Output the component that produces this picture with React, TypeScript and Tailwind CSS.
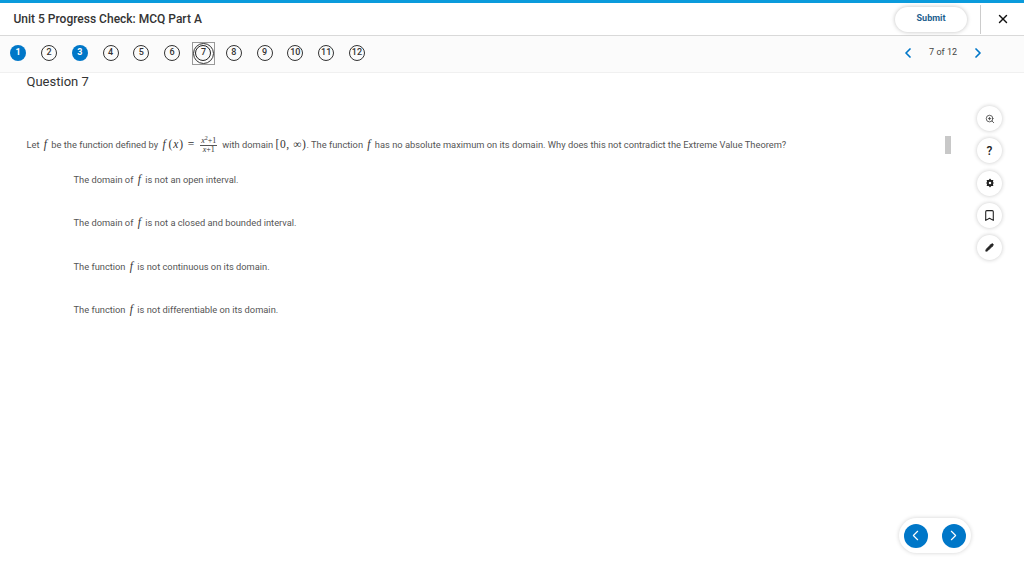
import { ChevronLeft, ChevronRight, X, ZoomIn, Bookmark, Pencil } from "lucide-react"

const questions = [1, 2, 3, 4, 5, 6, 7, 8, 9, 10, 11, 12]
const answered = [1, 3]

function F() {
  return <span className="mx-[2px] font-['Liberation_Serif'] text-[11.5px] italic text-[#333]">f</span>
}

function Fraction() {
  return (
    <span className="ml-[5px] mr-[5px] inline-flex flex-col items-center align-middle font-['Liberation_Serif'] text-[8px] leading-[8px] text-[#333]">
      <span className="border-b border-[#555] px-[1px] leading-[8px]">
        <i>x</i>
        <sup className="text-[6px]">2</sup>+1
      </span>
      <span className="leading-[8px]">
        <i>x</i>+1
      </span>
    </span>
  )
}

function ToolButton({ children }: { children: React.ReactNode }) {
  return (
    <button className="flex h-[25px] w-[25px] items-center justify-center rounded-full bg-white text-[#222] shadow-[0_0_4px_rgba(0,0,0,0.22)]">
      {children}
    </button>
  )
}

function Option({ before, after }: { before: string; after: string }) {
  return (
    <p className="h-[43.3px] text-[9.3px] leading-[14px] text-[#555]">
      {before} <F /> {after}
    </p>
  )
}

export default function App() {
  return (
    <div className="relative flex h-[576px] w-[1024px] flex-col overflow-hidden bg-white font-['Roboto',sans-serif]">
      <div className="h-[3px] bg-[#0a9bdc]" />

      <header className="flex h-[33px] items-center justify-between border-b border-[#d9d9d9] pl-[13.5px]">
        <h1 className="text-[12px] font-medium text-[#333]">Unit 5 Progress Check: MCQ Part A</h1>
        <div className="flex h-full items-center">
          <button className="mr-[13px] h-[25px] w-[72px] rounded-full bg-white text-[9px] font-bold text-[#1d5f8f] shadow-[0_0_4px_rgba(0,0,0,0.25)]">
            Submit
          </button>
          <div className="flex h-[29px] w-[44px] items-center justify-center border-l border-[#ccc]">
            <X size={14} strokeWidth={2.4} className="text-[#111]" />
          </div>
        </div>
      </header>

      <nav className="flex h-[37px] items-center justify-between border-b border-[#f0f0f0] bg-[#fbfbfb] pb-[2px] pl-[10.2px]">
        <div className="flex items-center">
          {questions.map((n) => (
            <div key={n} className="flex w-[30.8px] justify-start">
              {n === 7 ? (
                <div className="-ml-[3px] flex h-[23px] w-[23px] items-center justify-center border border-[#999]">
                  <div className="flex h-[21px] w-[21px] items-center justify-center rounded-full border border-[#333]">
                    <div className="flex h-[16px] w-[16px] items-center justify-center rounded-full border border-[#222] text-[9px] font-medium text-[#333]">
                      7
                    </div>
                  </div>
                </div>
              ) : answered.includes(n) ? (
                <div className="flex h-[16px] w-[16px] items-center justify-center rounded-full bg-[#0077c8] text-[9px] font-bold text-white">
                  {n}
                </div>
              ) : (
                <div className="flex h-[16px] w-[16px] items-center justify-center rounded-full border border-[#333] text-[9px] font-medium text-[#333]">
                  {n}
                </div>
              )}
            </div>
          ))}
        </div>
        <div className="mr-[38px] flex items-center">
          <ChevronLeft size={16} strokeWidth={2.6} className="text-[#0077c8]" />
          <span className="mx-[13px] text-[9px] text-[#444]">7 of 12</span>
          <ChevronRight size={16} strokeWidth={2.6} className="text-[#0077c8]" />
        </div>
      </nav>

      <main className="flex flex-1">
        <div className="flex-1 pl-[26.5px]">
          <h2 className="text-[13px] leading-[17px] text-[#333]">Question 7</h2>
          <p className="mt-[46px] h-[28px] whitespace-nowrap text-[9.3px] leading-[16px] text-[#555]">
            Let <F /> be the function defined by <F />
            <span className="ml-[1px] font-['Liberation_Serif'] text-[11.5px] tracking-[0.9px] text-[#333]">
              (<i>x</i>) =
            </span>
            <Fraction />
            with domain{" "}
            <span className="font-['Liberation_Serif'] text-[11.5px] tracking-[0.6px] text-[#333]">[0, ∞)</span>. The function <F /> has no
            absolute maximum on its domain. Why does this not contradict the Extreme Value Theorem?
          </p>
          <div className="mt-[8px] pl-[47px]">
            <Option before="The domain of" after="is not an open interval." />
            <Option before="The domain of" after="is not a closed and bounded interval." />
            <Option before="The function" after="is not continuous on its domain." />
            <Option before="The function" after="is not differentiable on its domain." />
          </div>
        </div>
        <div className="flex w-[80px] justify-between pl-[1px] pr-[22px]">
          <div className="mt-[63px] h-[18px] w-[6px] bg-[#c8c8c8]" />
          <div className="mt-[33px] flex flex-col gap-[7.3px]">
            <ToolButton>
              <ZoomIn size={10} strokeWidth={2} className="text-[#444]" />
            </ToolButton>
            <ToolButton>
              <span className="text-[12px] font-medium">?</span>
            </ToolButton>
            <ToolButton>
              <svg width="10" height="10" viewBox="0 0 24 24" fill="#222">
                <path d="M12 1l3 4h5l-1 5 3 2-3 2 1 5h-5l-3 4-3-4H4l1-5-3-2 3-2-1-5h5z" />
                <circle cx="12" cy="12" r="3" fill="#fff" />
              </svg>
            </ToolButton>
            <ToolButton>
              <Bookmark size={13} strokeWidth={2} />
            </ToolButton>
            <ToolButton>
              <Pencil size={9} strokeWidth={2.4} fill="#222" />
            </ToolButton>
          </div>
        </div>
      </main>

      <div className="absolute left-[898.5px] top-[518px] flex h-[35px] w-[72px] items-center justify-between rounded-full bg-white px-[5px] shadow-[0_0_4px_rgba(0,0,0,0.18)]">
        <button className="flex h-[24px] w-[24px] items-center justify-center rounded-full bg-[#0077c8] text-white">
          <ChevronLeft size={17} strokeWidth={1.6} />
        </button>
        <button className="flex h-[24px] w-[24px] items-center justify-center rounded-full bg-[#0077c8] text-white">
          <ChevronRight size={17} strokeWidth={1.6} />
        </button>
      </div>
    </div>
  )
}
